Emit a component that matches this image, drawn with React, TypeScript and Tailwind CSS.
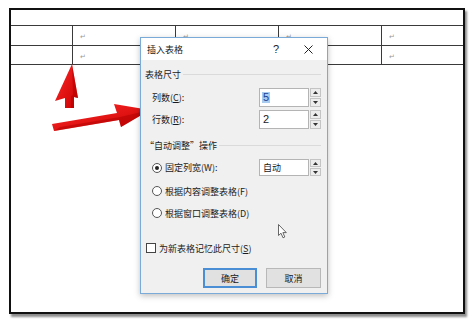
import React from "react";

function Spinner() {
  return (
    <div className="ml-[1px] flex h-full w-[11px] flex-col gap-[1px]">
      <div className="flex flex-1 items-center justify-center border border-[#c4c4c4] bg-[#ececec]">
        <svg width="5" height="3" viewBox="0 0 5 3"><polygon points="2.5,0 5,3 0,3" fill="#333" /></svg>
      </div>
      <div className="flex flex-1 items-center justify-center border border-[#c4c4c4] bg-[#ececec]">
        <svg width="5" height="3" viewBox="0 0 5 3"><polygon points="0,0 5,0 2.5,3" fill="#333" /></svg>
      </div>
    </div>
  );
}

function Heading({ text }: { text: string }) {
  return (
    <div className="flex h-[14px] items-center gap-[2px]">
      <span className="whitespace-nowrap">{text}</span>
      <div className="h-px flex-1 bg-[#dadada]" />
    </div>
  );
}

function Radio({ checked, label }: { checked?: boolean; label: string }) {
  return (
    <div className="flex items-center">
      <div className="ml-[7px] flex h-[10px] w-[10px] items-center justify-center rounded-full border border-[#555] bg-white">
        {checked && <div className="h-[4px] w-[4px] rounded-full bg-[#222]" />}
      </div>
      <span className="ml-[3px] whitespace-nowrap">{label}</span>
    </div>
  );
}

function Mark() {
  return <span className="ml-[7px] mt-[2px] text-[7px] leading-none text-[#9a9a9a]">↵</span>;
}

export default function App() {
  const cells = [0, 1, 2, 3, 4];
  return (
    <div className="relative h-[323px] w-[474px] overflow-hidden bg-white pl-[9px] pt-[8px] font-['Noto_Sans_CJK_SC','Liberation_Sans',sans-serif] text-[#1a1a1a]">
      {/* document frame */}
      <div className="flex h-[306px] w-[456px] flex-col border-2 border-[#111] shadow-[2px_3px_2px_rgba(0,0,0,0.45)]">
        <div className="h-[16px] border-b border-[#3a3a3a]" />
        {[20, 19].map((h, r) => (
          <div
            key={r}
            className={`grid grid-cols-[62px_103px_103px_103px_1fr] border-b border-[#3a3a3a] ${r === 0 ? "h-[20px]" : "h-[19px]"}`}
          >
            {cells.map((c) => (
              <div key={c} className={`flex items-center ${c < 4 ? "border-r border-[#3a3a3a]" : ""}`}>
                {c > 0 && <Mark />}
              </div>
            ))}
          </div>
        ))}
      </div>

      {/* red arrows */}
      <svg className="pointer-events-none absolute left-0 top-0" width="474" height="323" viewBox="0 0 474 323">
        <defs>
          <linearGradient id="ra" x1="0" y1="0" x2="1" y2="1">
            <stop offset="0" stopColor="#ff2a2a" />
            <stop offset="1" stopColor="#c80000" />
          </linearGradient>
        </defs>
        <polygon points="72,64 78,98 74,97 74,108 65,108 65,98 55,101" fill="url(#ra)" />
        <polygon points="72,64 78,98 74,97 74,108 71,108 71,96 73,95" fill="#b00000" opacity="0.55" />
        <polygon points="150,110 121,127 119,120 54,131 52,124 117,113 114,104" fill="url(#ra)" />
        <polygon points="150,110 121,127 119,120 54,131 60,127 120,117" fill="#b00000" opacity="0.5" />
      </svg>

      {/* dialog */}
      <div className="absolute left-[140px] top-[37px] flex h-[257px] w-[188px] flex-col border border-[#7aaad8] bg-[#f0f0f0] text-[9px] leading-none shadow-[0_2px_6px_rgba(0,0,0,0.25)]">
        <div className="flex h-[22px] items-center bg-white pl-[6px] pr-[14px]">
          <span>插入表格</span>
          <span className="ml-auto font-['Liberation_Sans',sans-serif] text-[11px]">?</span>
          <svg className="ml-[25px]" width="9" height="9" viewBox="0 0 9 9">
            <path d="M0.5 0.5 L8.5 8.5 M8.5 0.5 L0.5 8.5" stroke="#222" strokeWidth="1" />
          </svg>
        </div>
        <div className="flex flex-1 flex-col pl-[4px] pr-[6px]">
          <div className="mt-[7px]">
            <Heading text="表格尺寸" />
          </div>
          <div className="mt-[7px] flex h-[19px] items-center">
            <span className="ml-[7px]">列数(<span className="underline">C</span>):</span>
            <div className="ml-auto flex h-full">
              <div className="flex w-[50px] items-center border border-[#b4b4b4] bg-white pl-[2px] font-['Liberation_Sans',sans-serif] text-[11px]">
                <span className="bg-[#a8cbf0] px-[1px] text-[#1d3f8f]">5</span>
              </div>
              <Spinner />
            </div>
          </div>
          <div className="mt-[3px] flex h-[19px] items-center">
            <span className="ml-[7px]">行数(<span className="underline">R</span>):</span>
            <div className="ml-auto flex h-full">
              <div className="flex w-[50px] items-center border border-[#b4b4b4] bg-white pl-[3px] font-['Liberation_Sans',sans-serif] text-[11px]">
                2
              </div>
              <Spinner />
            </div>
          </div>
          <div className="mt-[9px]">
            <Heading text="“自动调整”操作" />
          </div>
          <div className="mt-[7px] flex h-[17px] items-center">
            <Radio checked label="固定列宽(W):" />
            <div className="ml-auto flex h-full">
              <div className="flex w-[50px] items-center border border-[#b4b4b4] bg-white pl-[3px]">自动</div>
              <Spinner />
            </div>
          </div>
          <div className="mt-[7px] flex h-[16px] items-center">
            <Radio label="根据内容调整表格(F)" />
          </div>
          <div className="mt-[6px] flex h-[16px] items-center">
            <Radio label="根据窗口调整表格(D)" />
          </div>
          <div className="mt-[19px] flex h-[16px] items-center">
            <div className="ml-[1px] h-[10px] w-[10px] border border-[#444] bg-white" />
            <span className="ml-[3px]">为新表格记忆此尺寸(<span className="underline">S</span>)</span>
          </div>
          <div className="mt-[12px] flex h-[20px] justify-end gap-[9px]">
            <div className="flex w-[54px] items-center justify-center border-2 border-[#4a8fd6] bg-[#e1e1e1]">确定</div>
            <div className="flex w-[55px] items-center justify-center border border-[#b8b8b8] bg-[#e1e1e1]">取消</div>
          </div>
        </div>
      </div>

      {/* mouse cursor */}
      <svg className="pointer-events-none absolute left-[278px] top-[224px]" width="10" height="15" viewBox="0 0 10 15">
        <path d="M0.5 0.5 L0.5 11.5 L3 9.2 L5 13.8 L6.8 13 L4.9 8.6 L8.3 8.6 Z" fill="#fff" stroke="#555" strokeWidth="0.9" strokeLinejoin="round" />
      </svg>
    </div>
  );
}
